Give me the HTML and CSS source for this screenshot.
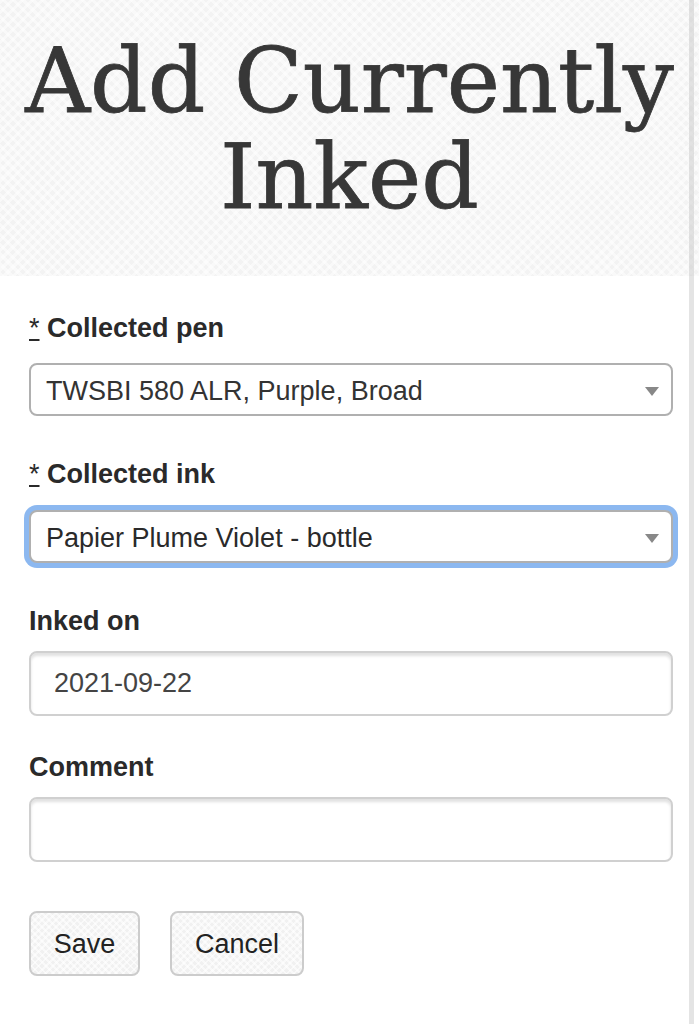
FILE: index.html
```html
<!DOCTYPE html>
<html lang="en">
<head>
    <meta charset="UTF-8">
    <meta name="viewport" content="width=device-width, initial-scale=1.0">
    <title>Add Currently Inked</title>
    <link rel="stylesheet" href="styles.css">
</head>
<body>
    <div class="page-header">
        <h1>Add Currently Inked</h1>
    </div>
    <form class="main-content">
        <div class="form-group group-select">
            <label for="pen"><abbr>*</abbr> Collected pen</label>
            <div class="select-wrap">
                <select id="pen">
                    <option>TWSBI 580 ALR, Purple, Broad</option>
                </select>
            </div>
        </div>
        <div class="form-group group-select">
            <label for="ink"><abbr>*</abbr> Collected ink</label>
            <div class="select-wrap is-focused">
                <select id="ink">
                    <option>Papier Plume Violet - bottle</option>
                </select>
            </div>
        </div>
        <div class="form-group">
            <label for="inked-on">Inked on</label>
            <input id="inked-on" type="text" value="2021-09-22">
        </div>
        <div class="form-group">
            <label for="comment">Comment</label>
            <input id="comment" type="text">
        </div>
        <div class="form-buttons">
            <button type="button" class="btn btn-save">Save</button>
            <button type="button" class="btn btn-cancel">Cancel</button>
        </div>
    </form>
    <div class="scroll-strip"></div>
</body>
</html>
```

FILE: styles.css
```css
html, body{
    margin: 0;
    height: 1024px;
    overflow: hidden;
}
body{
    position: relative;
    background-color: #fff;
    color: #2a2a2a;
    font-family: "Liberation Sans", Arial, sans-serif;
}
.page-header{
    height: 276px;
    box-sizing: border-box;
    padding-top: 33px;
    background-color: #f3f3f3;
    background-image:
        repeating-linear-gradient(45deg, rgba(255,255,255,0.5) 0 3px, transparent 3px 7px),
        repeating-linear-gradient(-45deg, rgba(255,255,255,0.5) 0 3px, transparent 3px 7px);
}
.page-header h1{
    margin: 0;
    font-family: "DejaVu Serif", serif;
    font-weight: 400;
    font-size: 90px;
    line-height: 96px;
    text-align: center;
    color: #373737;
    -webkit-text-stroke: 0.8px #373737;
}
.main-content{
    padding: 34px 26px 0 29px;
}
.form-group{
    margin-bottom: 33px;
}
.form-group label{
    display: block;
    padding-top: 1px;
    font-size: 27px;
    font-weight: 700;
    line-height: 34px;
    margin-bottom: 13px;
}
.form-group abbr{
    font-weight: 400;
    text-decoration: underline;
}
.group-select{
    margin-bottom: 40px;
}
.group-select label{
    margin-bottom: 18px;
}
.group-select + .group-select label{
    margin-bottom: 19px;
}
.select-wrap{
    position: relative;
}
.select-wrap:after{
    content: '';
    position: absolute;
    top: 24px;
    right: 14px;
    border-left: 7.5px solid transparent;
    border-right: 7.5px solid transparent;
    border-top: 9px solid #888;
}
.select-wrap select{
    display: block;
    width: 100%;
    height: 53px;
    box-sizing: border-box;
    padding: 2px 15px 0;
    appearance: none;
    -webkit-appearance: none;
    background: #fff;
    border: 2px solid #b0b0b0;
    border-radius: 8px;
    font-family: inherit;
    font-size: 27px;
    color: #333;
}
.is-focused select{
    box-shadow: 0 0 0 5px #8cb8f0;
    color: #2a2a2a;
}
.form-group input{
    display: block;
    width: 100%;
    height: 65px;
    box-sizing: border-box;
    padding: 0 23px;
    background: #fff;
    border: 2px solid #d0d0d0;
    border-radius: 8px;
    box-shadow: inset 0 3px 3px rgba(0,0,0,0.12);
    font-family: inherit;
    font-size: 27px;
    color: #444;
    outline: none;
}
.form-buttons{
    display: flex;
    gap: 30px;
    margin-top: 49px;
}
.btn{
    height: 65px;
    padding: 2px 0 0;
    background-color: #f1f1f1;
    background-image:
        repeating-linear-gradient(45deg, rgba(255,255,255,0.6) 0 2px, transparent 2px 5px),
        repeating-linear-gradient(-45deg, rgba(255,255,255,0.6) 0 2px, transparent 2px 5px);
    border: 2px solid #ccc;
    border-radius: 8px;
    font-family: inherit;
    font-size: 27px;
    color: #222;
}
.btn-save{
    width: 111px;
}
.btn-cancel{
    width: 134px;
}
.scroll-strip{
    position: absolute;
    top: 0;
    bottom: 0;
    left: 689px;
    width: 5px;
    background-color: rgba(190,190,190,0.42);
}
```
